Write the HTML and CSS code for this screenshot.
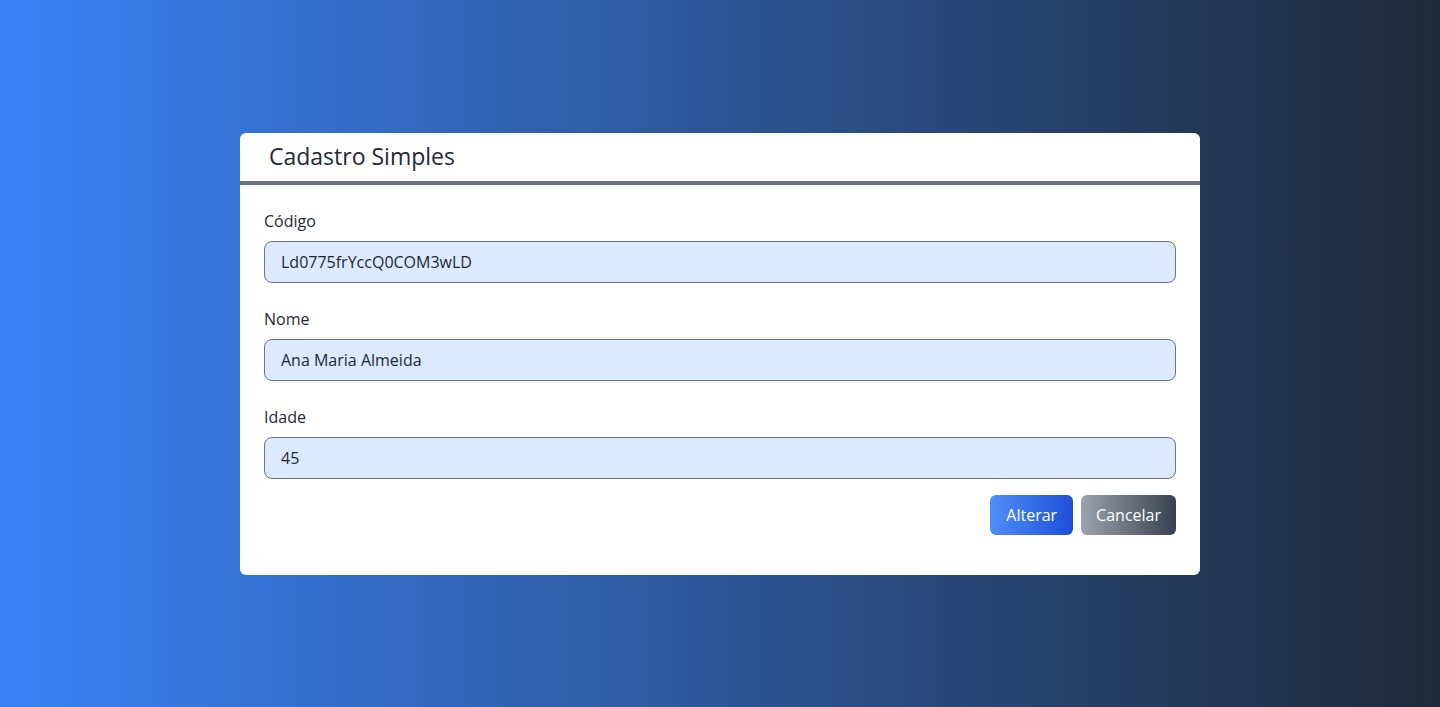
FILE: index.html
```html
<!DOCTYPE html>
<html lang="pt-BR">
<head>
    <meta charset="UTF-8">
    <meta name="viewport" content="width=device-width, initial-scale=1.0">
    <title>Cadastro Simples</title>
    <link rel="stylesheet" href="styles.css">
</head>
<body>

    <main class="page">
        <form class="card" onsubmit="return false">
            <header class="card-header">
                <h1>Cadastro Simples</h1>
            </header>

            <div class="card-body">
                <div class="field">
                    <label for="codigo">Código</label>
                    <input id="codigo" type="text" value="Ld0775frYccQ0COM3wLD">
                </div>

                <div class="field">
                    <label for="nome">Nome</label>
                    <input id="nome" type="text" value="Ana Maria Almeida">
                </div>

                <div class="field field-last">
                    <label for="idade">Idade</label>
                    <input id="idade" type="text" value="45">
                </div>

                <div class="actions">
                    <button type="submit" class="btn btn-primary">Alterar</button>
                    <button type="button" class="btn btn-secondary">Cancelar</button>
                </div>
            </div>
        </form>
    </main>

</body>
</html>
```

FILE: styles.css
```css
/* Layout geral */
* {
    box-sizing: border-box;
}
html, body {
    height: 100%;
}
body {
    margin: 0;
    font-family: "Open Sans", "Noto Sans", sans-serif;
    color: #1f2937;
    background: linear-gradient(to right, #3b82f6, #1f2937);
}
.page {
    min-height: 100%;
    display: flex;
    align-items: center;
    justify-content: center;
}

/* Cartão */
.card {
    width: 960px;
    background-color: #fff;
    border-radius: 6px;
    overflow: hidden;
}
.card-header {
    height: 52px;
    padding: 0 29px 2px;
    display: flex;
    align-items: center;
    border-bottom: 4px solid #6b7280;
}
.card-header h1 {
    margin: 0;
    font-size: 23px;
    font-weight: 400;
    color: #1f2937;
}
.card-body {
    padding: 24px 24px 40px;
}

/* Campos */
.field {
    display: flex;
    flex-direction: column;
    gap: 8px;
    margin-bottom: 24px;
}
.field-last {
    margin-bottom: 16px;
}
.field label {
    font-size: 16px;
    line-height: 24px;
}
.field input {
    height: 42px;
    padding: 0 16px;
    font-family: inherit;
    font-size: 16px;
    color: #1f2937;
    background-color: #dbeafe;
    border: 1px solid #6b7280;
    border-radius: 8px;
    outline: none;
}

/* Botões */
.actions {
    display: flex;
    justify-content: flex-end;
    gap: 8px;
}
.btn {
    height: 40px;
    padding: 0 16px;
    font-family: inherit;
    font-size: 16px;
    color: #fff;
    border: none;
    border-radius: 6px;
    cursor: pointer;
}
.btn-primary {
    background: linear-gradient(to right, #4f8ff6, #1d4ed8);
}
.btn-secondary {
    padding: 0 15px;
    background: linear-gradient(to right, #9ca3af, #374151);
}
```
